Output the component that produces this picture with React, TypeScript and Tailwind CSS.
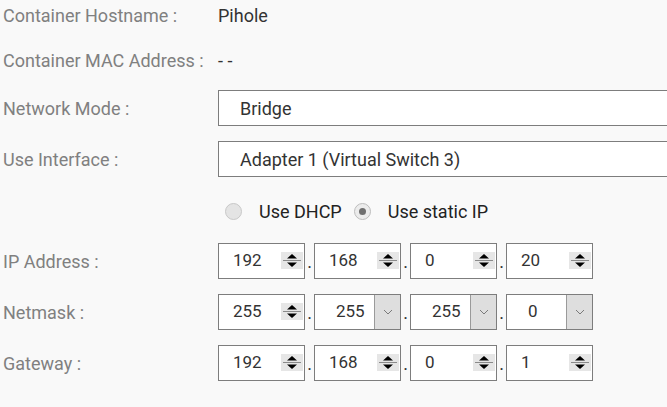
import React from "react";

const Spinner = () => (
  <div className="absolute right-[1px] top-[8px] h-[17px] w-[22px] bg-[#e6e6e6]">
    <svg width="22" height="17" viewBox="0 0 22 17">
      <polygon points="6,6.5 16,6.5 11,2" fill="#000" />
      <line x1="2" y1="8.5" x2="20" y2="8.5" stroke="#8a8a8a" strokeWidth="1" />
      <polygon points="6,10.5 16,10.5 11,15" fill="#000" />
    </svg>
  </div>
);

const NumberBox = ({ value }: { value: string }) => (
  <div className="relative flex h-[36px] w-[87px] items-center border border-[#7d7d7d] bg-white pl-[14px] text-[17px] text-[#333]">
    {value}
    <Spinner />
  </div>
);

const SelectBox = ({ value }: { value: string }) => (
  <div className="flex h-[36px] w-[87px] items-center border border-[#7d7d7d] bg-white text-[17px] text-[#333]">
    <span className="flex-1 pl-[21px]">{value}</span>
    <div className="flex h-full w-[26px] items-center justify-center border-l border-[#9a9a9a] bg-[#dedede]">
      <svg width="10" height="6" viewBox="0 0 10 6">
        <polyline points="1,1 5,5 9,1" fill="none" stroke="#7a7a7a" strokeWidth="1" />
      </svg>
    </div>
  </div>
);

const Dot = () => <span className="flex h-[36px] w-[9px] items-end justify-center pb-[4px] text-[#333]">.</span>;

const Label = ({ children }: { children: React.ReactNode }) => (
  <div className="w-[218px] shrink-0 pl-[3px] text-[#808080]">{children}</div>
);

type Field = { kind: "num" | "sel"; value: string };

const IpRow = ({ label, fields, className }: { label: string; fields: Field[]; className: string }) => (
  <div className={`flex items-center ${className}`}>
    <Label>{label}</Label>
    {fields.map((f, i) => (
      <div key={i} className="flex items-center">
        {f.kind === "num" ? <NumberBox value={f.value} /> : <SelectBox value={f.value} />}
        {i < fields.length - 1 ? <Dot /> : null}
      </div>
    ))}
  </div>
);

const App = () => {
  return (
    <div
      className="h-[407px] w-[667px] overflow-hidden bg-[#f9f9f9] text-[18px]"
      style={{ fontFamily: "Roboto, 'Liberation Sans', sans-serif" }}
    >
      <div className="flex h-[30px] items-center">
        <Label>Container Hostname :</Label>
        <span className="text-[#333]">Pihole</span>
      </div>
      <div className="mt-[15px] flex h-[30px] items-center">
        <Label>Container MAC Address :</Label>
        <span className="text-[#333]">- -</span>
      </div>
      <div className="mt-[15px] flex h-[36px] items-center">
        <Label>Network Mode :</Label>
        <div className="flex h-[36px] flex-1 items-center border-y border-l border-[#7d7d7d] bg-white pl-[21px] text-[#333]">
          Bridge
        </div>
      </div>
      <div className="mt-[15px] flex h-[36px] items-center">
        <Label>Use Interface :</Label>
        <div className="flex h-[36px] flex-1 items-center border-y border-l border-[#7d7d7d] bg-white pl-[21px] text-[#333]">
          Adapter 1 (Virtual Switch 3)
        </div>
      </div>
      <div className="mt-[19px] flex h-[30px] items-center pl-[225px] text-[#222]">
        <span className="h-[17px] w-[17px] rounded-full border border-[#c8c8c8] bg-[#e4e4e4]" />
        <span className="ml-[17px]">Use DHCP</span>
        <span className="ml-[12px] flex h-[17px] w-[17px] items-center justify-center rounded-full border border-[#bdbdbd] bg-[#ececec]">
          <span className="h-[7px] w-[7px] rounded-full bg-[#6f6f6f]" />
        </span>
        <span className="ml-[17px]">Use static IP</span>
      </div>
      <IpRow
        className="mt-[17px]"
        label="IP Address :"
        fields={[
          { kind: "num", value: "192" },
          { kind: "num", value: "168" },
          { kind: "num", value: "0" },
          { kind: "num", value: "20" },
        ]}
      />
      <IpRow
        className="mt-[15px]"
        label="Netmask :"
        fields={[
          { kind: "num", value: "255" },
          { kind: "sel", value: "255" },
          { kind: "sel", value: "255" },
          { kind: "sel", value: "0" },
        ]}
      />
      <IpRow
        className="mt-[15px]"
        label="Gateway :"
        fields={[
          { kind: "num", value: "192" },
          { kind: "num", value: "168" },
          { kind: "num", value: "0" },
          { kind: "num", value: "1" },
        ]}
      />
    </div>
  );
};

export default App;
